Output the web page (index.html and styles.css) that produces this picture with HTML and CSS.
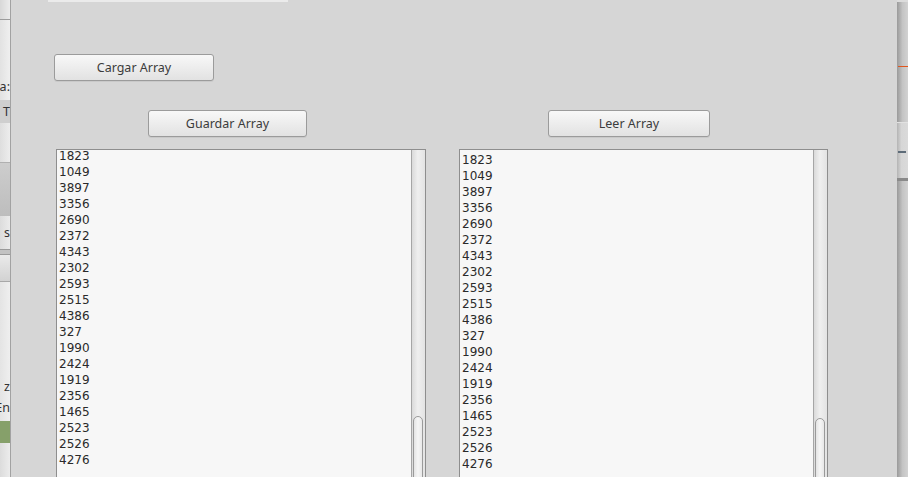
FILE: index.html
```html
<!DOCTYPE html>
<html lang="es">
<head>
    <meta charset="UTF-8">
    <title>Array</title>
    <link rel="stylesheet" href="styles.css">
</head>
<body>
    <div class="side-left">
        <div class="sl-a"></div>
        <div class="sl-b"><span class="frag">ta:</span></div>
        <div class="sl-c"><span class="frag">T</span></div>
        <div class="sl-d"></div>
        <div class="sl-e"></div>
        <div class="sl-f"><span class="frag">s</span></div>
        <div class="sl-g"></div>
        <div class="sl-h"></div>
        <div class="sl-i"><span class="frag frag-z">z</span><span class="frag">En</span></div>
        <div class="sl-j"></div>
        <div class="sl-k"></div>
    </div>

    <div class="main">
        <div class="top-stub"></div>
        <button class="gtk-button btn-cargar">Cargar Array</button>

        <div class="panels">
            <div class="panel">
                <button class="gtk-button btn-guardar">Guardar Array</button>
                <div class="text-area">
                    <div class="list list-scrolled" id="list-left"></div>
                    <div class="scroll"><div class="thumb thumb-left"></div></div>
                </div>
            </div>
            <div class="panel">
                <button class="gtk-button btn-leer">Leer Array</button>
                <div class="text-area text-area-right">
                    <div class="list list-top" id="list-right"></div>
                    <div class="scroll"><div class="thumb thumb-right"></div></div>
                </div>
            </div>
        </div>
    </div>

    <div class="side-right">
        <div class="sr-a"></div>
        <div class="sr-b"><div class="sr-orange"></div></div>
        <div class="sr-c"><div class="sr-blue"></div></div>
        <div class="sr-d"></div>
        <div class="sr-e"></div>
    </div>

    <script>
        var numeros = [1823, 1049, 3897, 3356, 2690, 2372, 4343, 2302, 2593, 2515,
                       4386, 327, 1990, 2424, 1919, 2356, 1465, 2523, 2526, 4276];

        function llenar(id) {
            var el = document.getElementById(id);
            numeros.forEach(function (n) {
                var line = document.createElement('div');
                line.className = 'line';
                line.textContent = n;
                el.appendChild(line);
            });
        }

        llenar('list-left');
        llenar('list-right');
    </script>
</body>
</html>
```

FILE: styles.css
```css
html, body {
    margin: 0;
    padding: 0;
}
body {
    width: 908px;
    height: 477px;
    overflow: hidden;
    display: flex;
    background: #d6d6d6;
    font-family: "Noto Sans", "DejaVu Sans", sans-serif;
}

/* ventana de atras, a la izquierda */
.side-left {
    width: 10px;
    flex-shrink: 0;
    border-right: 1px solid #a2a2a2;
    display: flex;
    flex-direction: column;
    overflow: hidden;
    font-size: 12.5px;
    color: #333;
}
.side-left > div {
    display: flex;
    flex-direction: column;
    align-items: flex-end;
    overflow: hidden;
    flex-shrink: 0;
}
.frag {
    line-height: 14px;
    white-space: nowrap;
}
.sl-a { height: 19px; background: linear-gradient(to right, #d8d8d8, #ececec); border-bottom: 1px solid #9c9c9c; }
.sl-b { height: 80px; background: linear-gradient(to right, #e2e2e2, #efefef); justify-content: flex-end; padding-bottom: 6px; box-sizing: border-box; }
.sl-c { height: 23px; background: #cfcfcf; justify-content: center; }
.sl-d { height: 39px; background: linear-gradient(to right, #dedede, #ededed); }
.sl-e { height: 53px; background: linear-gradient(to bottom, #cdcdcd, #bdbdbd); border-top: 1px solid #b0b0b0; }
.sl-f { height: 33px; background: linear-gradient(to right, #dcdcdc, #ebebeb); justify-content: center; }
.sl-g { height: 6px; background: #c2c2c2; border-top: 1px solid #9a9a9a; border-bottom: 1px solid #9a9a9a; box-sizing: border-box; }
.sl-h { height: 26px; background: linear-gradient(to bottom, #eaeaea, #d2d2d2); border-bottom: 1px solid #a8a8a8; }
.sl-i { height: 139px; background: linear-gradient(to right, #e4e4e4, #efefef); justify-content: flex-end; padding-bottom: 6px; box-sizing: border-box; }
.frag-z { margin-bottom: 7px; }
.sl-j { height: 22px; background: #86a06a; }
.side-left .sl-k { flex: 1 0 auto; background: linear-gradient(to right, #dcdcdc, #ececec); }

/* ventana principal */
.main {
    width: 886px;
    flex-shrink: 0;
    display: flex;
    flex-direction: column;
    align-items: flex-start;
}
.main > * {
    flex-shrink: 0;
}
.top-stub {
    width: 240px;
    height: 2px;
    margin-left: 37px;
    background: #ebebeb;
}
.gtk-button {
    height: 27px;
    width: 160px;
    flex-shrink: 0;
    padding: 0;
    border: 1px solid #9b9b9b;
    border-radius: 3px;
    background: linear-gradient(#f8f8f8, #e2e2e2);
    box-shadow: 0 1px 0 rgba(0, 0, 0, 0.06);
    font-family: "Noto Sans", "DejaVu Sans", sans-serif;
    font-size: 12.5px;
    color: #3c3c3c;
    cursor: pointer;
}
.btn-cargar {
    margin-top: 52px;
    margin-left: 43px;
}
.panels {
    display: flex;
    gap: 33px;
    margin-top: 29px;
    margin-left: 45px;
}
.panel {
    display: flex;
    flex-direction: column;
    align-items: flex-start;
}
.btn-guardar {
    width: 159px;
    margin-left: 92px;
}
.btn-leer {
    width: 162px;
    margin-left: 89px;
}
.text-area {
    width: 370px;
    height: 340px;
    flex-shrink: 0;
    margin-top: 12px;
    box-sizing: border-box;
    border: 1px solid #8e8e8e;
    background: #f7f7f7;
    display: flex;
    overflow: hidden;
}
.text-area-right {
    width: 369px;
}
.list {
    flex: 1;
    padding-left: 2px;
    font-family: "DejaVu Sans", sans-serif;
    font-size: 12px;
    color: #2a2a2a;
}
.list-scrolled {
    margin-top: -2px;
}
.list-top {
    padding-top: 2px;
}
.line {
    height: 16px;
    line-height: 16px;
}
.scroll {
    width: 13px;
    border-left: 1px solid #a6a6a6;
    background: linear-gradient(to right, #dadada, #efefef 45%, #e3e3e3);
}
.thumb {
    width: 10px;
    height: 120px;
    margin-left: 1px;
    box-sizing: border-box;
    border: 1px solid #9a9a9a;
    border-radius: 5px 5px 0 0;
    background: linear-gradient(to right, #e4e4e4, #f6f6f6 50%, #e8e8e8);
}
.thumb-left { margin-top: 266px; }
.thumb-right { margin-top: 268px; }

/* ventana de atras, a la derecha */
.side-right {
    width: 11px;
    flex-shrink: 0;
    display: flex;
    flex-direction: column;
}
.side-right > div {
    flex-shrink: 0;
    background: linear-gradient(to right, #9a9a9a, #c4c4c4 50%, #d2d2d2);
}
.side-right .sr-a { height: 2px; background: #dcdcdc; }
.sr-b { height: 120px; display: flex; flex-direction: column; }
.sr-orange {
    height: 1px;
    margin-top: 64px;
    margin-left: 1px;
    background: #e0561e;
}
.side-right .sr-c {
    height: 56px;
    border-top: 1px solid #e2e2e2;
    box-sizing: border-box;
    background: linear-gradient(to right, #b4b4b4, #d6d6d6 40%, #dadada);
    display: flex;
    flex-direction: column;
}
.sr-blue {
    height: 2px;
    width: 8px;
    margin-top: 28px;
    margin-left: 1px;
    background: #5d6b78;
}
.side-right .sr-d { height: 3px; background: #8a8a8a; }
.side-right .sr-e { flex: 1 0 auto; }
```
